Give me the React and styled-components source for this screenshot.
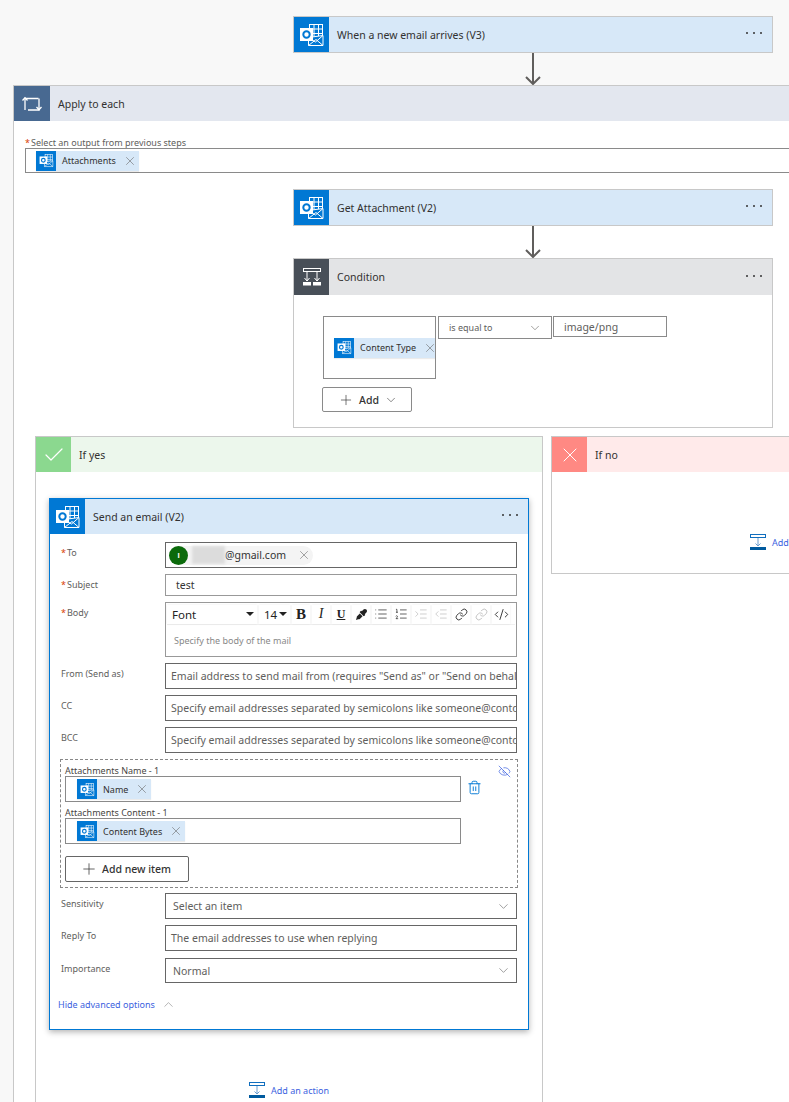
import React from "react";
import styled, { createGlobalStyle } from "styled-components";
import { ChevronDown, ChevronUp, X, Plus, Check, List, ListOrdered, IndentIncrease, IndentDecrease, Link, CodeXml, EyeOff, Trash2 } from "lucide-react";
import { FaEyeDropper } from "react-icons/fa";

const Global = createGlobalStyle`
  html, body { margin: 0; padding: 0; background: #f8f8f8; }
  * { box-sizing: border-box; }
  body { font-family: "Noto Sans", "Open Sans", sans-serif; color: #252423; }
`;

const Page = styled.div`
  width: 789px; height: 1102px; overflow: hidden; background: #f8f8f8; padding-top: 16px;
`;
const Center = styled.div`
  margin-left: ${p => p.$left}px; width: ${p => p.$width}px; display: flex; flex-direction: column;
`;
const Card = styled.div`
  border: 1px solid #c8c8c8; background: ${p => p.$bg || "#fff"};
`;
const Head = styled.div`
  height: ${p => p.$h || 35}px; background: ${p => p.$bg}; display: flex; align-items: center;
`;
const IconBlock = styled.div`
  width: ${p => p.$w || 35}px; height: 100%; background: ${p => p.$bg}; display: flex; align-items: center; justify-content: center; flex: none;
  color: #fff;
`;
const Title = styled.span`
  margin-left: 8px; font-size: 10.5px; color: #323130; flex: 1; white-space: nowrap;
`;
const DotRow = styled.div`
  display: flex; gap: 5px; margin: -3px 10px 0 0; flex: none;
`;
const Dot = styled.span`
  width: 2px; height: 2px; background: #333; border-radius: 50%;
`;
const ArrowWrap = styled.div`
  display: flex; justify-content: center; height: ${p => p.$h}px; line-height: 0;
`;
const Scope = styled.div`
  margin: 0 0 0 13px; width: 900px; background: #fff; border: 1px solid #c8c8c8; border-bottom: 0; height: 1020px;
`;
const ScopeBody = styled.div`
  padding: 0 0 0 11px;
`;
const TopLabel = styled.div`
  font-size: 9px; line-height: 10px; color: #605e5c; margin-top: 17px; white-space: nowrap;
`;
const Star = styled.span`
  color: #d83b01; margin-right: 1px;
`;
const Wide = styled.div`
  width: 880px; height: 25px; border: 1px solid #8a8a8a; display: flex; align-items: center; padding-left: 10px;
`;
const Token = styled.div`
  height: 20px; background: #d7e8f8; display: inline-flex; align-items: center; flex: none; font-size: 9px; color: #323130;
  box-shadow: 0 1px 1px rgba(0,0,0,.08); white-space: nowrap;
`;
const TokenIcon = styled.div`
  width: 20px; height: 100%; background: #0078d4; display: flex; align-items: center; justify-content: center; margin-right: 6px;
`;
const TokenX = styled(X)`
  margin-left: 7px; margin-right: 2px; color: #666;
`;
const Inner = styled.div`
  margin-left: 279px; width: 480px; margin-top: 16px; display: flex; flex-direction: column;
`;
const CondBody = styled.div`
  padding: 21px 0 15px 28px;
`;
const CondRow = styled.div`
  display: flex; align-items: flex-start; padding-left: 1px;
`;
const Operand = styled.div`
  width: 113px; height: 63px; border: 1px solid #8a8a8a; display: flex; align-items: center; padding-left: 10px; overflow: hidden; margin-right: 2px;
`;
const OpSelect = styled.div`
  width: 114px; height: 23px; border: 1px solid #8a8a8a; font-size: 9px; display: flex; align-items: center; justify-content: space-between; padding: 0 9px 0 10px; margin-right: 1px; color: #605e5c;
`;
const OpValue = styled.div`
  width: 114px; height: 21px; border: 1px solid #8a8a8a; font-size: 10.5px; display: flex; align-items: center; padding-left: 10px; color: #605e5c;
`;
const AddBtn = styled.div`
  width: 90px; height: 25px; margin-top: 8px; border: 1px solid #8a8a8a; border-radius: 2px; display: flex; align-items: center; padding-left: 15px; font-size: 10.5px; font-weight: 500; color: #333; gap: 5px;
`;
const Branches = styled.div`
  display: flex; gap: 8px; margin: 8px 0 0 21px; align-items: flex-start;
`;
const Branch = styled.div`
  width: ${p => p.$w}px; height: ${p => p.$height}px; border: 1px solid #c8c8c8; ${p => p.$open && "border-bottom: 0;"} background: #fff; flex: none;
`;
const ActionCard = styled.div`
  width: 480px; height: 532px; margin: 26px 0 0 13px; border: 1px solid #0078d4; background: #fff; box-shadow: 0 2px 6px rgba(0,0,0,.3);
`;
const Form = styled.div`
  padding: 8px 11px 0;
`;
const Row = styled.div`
  display: flex; margin-bottom: ${p => p.$mb ?? 6}px;
`;
const Label = styled.div`
  width: 104px; flex: none; font-size: 9px; line-height: 14px; padding-top: 4px; color: #605e5c; white-space: nowrap;
`;
const Input = styled.div`
  width: 352px; height: ${p => p.$h}px; border: 1px solid ${p => p.$dark ? "#666" : "#999"}; display: flex; align-items: center; justify-content: space-between;
  font-size: 10.5px; color: ${p => p.$dim ? "#605e5c" : "#333"}; padding-left: ${p => p.$pad ?? 5}px; padding-right: 3px; white-space: nowrap; overflow: hidden;
`;
const Chip = styled.div`
  height: 19px; width: 144px; margin-left: -3px; border-radius: 10px; background: #f4f4f4; display: flex; align-items: center; font-size: 10.5px; flex: none; color: #333;
`;
const Avatar = styled.div`
  width: 19px; height: 19px; border-radius: 50%; background: #0b6a0b; color: #fff; font-family: "Liberation Sans", sans-serif; font-size: 8px; font-weight: 700; display: flex; align-items: center; justify-content: center; flex: none;
`;
const Blur = styled.div`
  width: 33px; height: 18px; margin-left: 4px; background: #dcdcdc; filter: blur(1.5px); flex: none;
`;
const ChipX = styled(X)`
  margin-left: 11px; color: #666;
`;
const Body = styled.div`
  width: 352px; height: 55px; border: 1px solid #999; display: flex; flex-direction: column;
`;
const Toolbar = styled.div`
  height: 21px; margin: 1px 1px 0; display: flex; align-items: center; gap: 2px; border-bottom: 1px solid #f0f0f0; background: #fff;
`;
const Tool = styled.div`
  width: ${p => p.$w || 18}px; height: 19px; display: flex; align-items: center; justify-content: ${p => p.$between ? "space-between" : "center"}; padding: ${p => p.$between ? "0 3px 0 5px" : "0"};
  font-size: 11.5px; color: ${p => p.$off ? "#bbb" : "#222"}; box-shadow: 0 0 2px rgba(0,0,0,.08); flex: none;
`;
const SerifB = styled.span`
  font-family: "Liberation Serif", serif; font-size: 15px; font-weight: 700; color: #222;
`;
const SerifI = styled.span`
  font-family: "Liberation Serif", serif; font-size: 14px; font-style: italic; color: #222;
`;
const SerifU = styled.span`
  font-family: "Liberation Serif", serif; font-size: 12px; font-weight: 700; text-decoration: underline; color: #222;
`;
const Caret = styled.span`
  width: 0; height: 0; border-left: 4px solid transparent; border-right: 4px solid transparent; border-top: 4px solid #222;
`;
const Placeholder = styled.div`
  font-size: 9px; color: #888; padding: 9px 0 0 8px;
`;
const Dashed = styled.div`
  width: 458px; height: 129px; margin: 0 0 5px -1px; border: 1px dashed #888; padding: 5px 4px 0; display: flex;
`;
const ArrCol = styled.div`
  width: 396px; flex: none;
`;
const ArrLabel = styled.div`
  font-size: 9px; line-height: 11px; color: #484644; white-space: nowrap;
`;
const ArrInput = styled.div`
  height: 26px; border: 1px solid #8a8a8a; display: flex; align-items: center; padding-left: 11px; margin-bottom: 5px;
`;
const ArrSide = styled.div`
  flex: 1; display: flex; flex-direction: column;
`;
const EyeBtn = styled(EyeOff)`
  color: #3b5fe0; align-self: flex-end; margin: 0 2px 0 0;
`;
const TrashBtn = styled(Trash2)`
  color: #0078d4; margin: 2px 0 0 6px;
`;
const AddItem = styled.div`
  width: 124px; height: 26px; margin-top: 12px; border: 1px solid #666; border-radius: 2px; display: flex; align-items: center; padding-left: 14px; gap: 4px; font-size: 10.5px; font-weight: 500; color: #333;
`;
const LinkRow = styled.div`
  display: flex; align-items: center; gap: 6px; margin: 14px 0 0 -3px; font-size: 9px; color: #3b5fe0;
`;
const GrayChev = styled(ChevronUp)`
  color: #888;
`;
const SelectChev = styled(ChevronDown)`
  color: #666; margin-right: 2px;
`;
const AddAction = styled.div`
  display: flex; align-items: center; gap: 6px; font-size: 9px; color: #3b5fe0; white-space: nowrap;
  margin: ${p => p.$m};
`;

const Outlook = ({ size = 26 }) => (
  <svg width={size} height={size} viewBox="0 0 26 26" fill="none">
    <g stroke="#fff" strokeWidth="1" fill="none">
      <rect x="10.5" y="2.5" width="13" height="13" />
      <path d="M15 2.5v13M19.5 2.5v13M10.5 7h13M10.5 11.5h13" />
      <path d="M9.5 15.5v8h14.5v-10z" fill="#0078d4" />
      <path d="M9.5 23.5l7.5-6M24 23.5l-7-6M9.5 15.5l7 4.5 7.5-6.5" />
    </g>
    <rect x="1" y="6" width="13" height="13" fill="#fff" />
    <circle cx="7.5" cy="12.5" r="3.2" stroke="#0078d4" strokeWidth="2" />
  </svg>
);

const Apply = () => (
  <svg width="20" height="16" viewBox="0 0 20 16" fill="none" stroke="#fff" strokeWidth="1.3">
    <path d="M3 14V2.5h13.5" />
    <path d="M0.5 4.5L3 1.8l2.5 2.7" />
    <path d="M17 2.5v11.5H6" />
    <path d="M14.5 11L17 13.8l2.5-2.8" />
  </svg>
);

const CondIcon = () => (
  <svg width="20" height="20" viewBox="0 0 20 20" fill="none" stroke="#fff" strokeWidth="1">
    <rect x="1.5" y="1.5" width="17" height="3" />
    <path d="M5 5v9M15 5v9M2.5 11l2.5 3 2.5-3M12.5 11l2.5 3 2.5-3" />
    <rect x="1" y="15" width="8" height="3.5" fill="#fff" stroke="none" />
    <rect x="11" y="15" width="8" height="3.5" fill="#fff" stroke="none" />
  </svg>
);

const ActionIcon = () => (
  <svg width="16" height="16" viewBox="0 0 16 16" fill="none">
    <rect x="0.5" y="0.5" width="15" height="3" stroke="#106ebe" />
    <path d="M8 4v8" stroke="#6e9fd0" />
    <path d="M5.5 9.5L8 12l2.5-2.5" stroke="#6e9fd0" />
    <rect y="13" width="16" height="3" fill="#005a9e" />
  </svg>
);

const OutToken = ({ children }) => (
  <Token>
    <TokenIcon><Outlook size={15} /></TokenIcon>
    {children}
    <TokenX size={14} strokeWidth={1} />
  </Token>
);

const Arrow = ({ h }) => (
  <ArrowWrap $h={h}>
    <svg width="16" height={h} viewBox={`0 0 16 ${h}`} fill="none" stroke="#605e5c" strokeWidth="2">
      <path d={`M8 0V${h - 1}`} />
      <path d={`M1 ${h - 8}L8 ${h - 1}L15 ${h - 8}`} />
    </svg>
  </ArrowWrap>
);

const Dots = () => (
  <DotRow><Dot /><Dot /><Dot /></DotRow>
);

const Step = ({ title }) => (
  <Card>
    <Head $bg="#d7e8f8">
      <IconBlock $bg="#0078d4"><Outlook /></IconBlock>
      <Title>{title}</Title>
      <Dots />
    </Head>
  </Card>
);

const Field = ({ req, label, children, mb }) => (
  <Row $mb={mb}>
    <Label>{req && <Star>*</Star>}{label}</Label>
    {children}
  </Row>
);

export default function App() {
  return (
    <Page>
      <Global />
      <Center $left={293} $width={480}>
        <Step title="When a new email arrives (V3)" />
        <Arrow h={32} />
      </Center>
      <Scope>
        <Head $bg="#e3e7ef" $h={35}>
          <IconBlock $bg="#486991" $w={36}><Apply /></IconBlock>
          <Title>Apply to each</Title>
        </Head>
        <ScopeBody>
          <TopLabel><Star>*</Star>Select an output from previous steps</TopLabel>
          <Wide><OutToken>Attachments</OutToken></Wide>
        </ScopeBody>
        <Inner>
          <Step title="Get Attachment (V2)" />
          <Arrow h={32} />
          <Card>
            <Head $bg="#e3e4e6" $h={36}>
              <IconBlock $bg="#484f58"><CondIcon /></IconBlock>
              <Title>Condition</Title>
              <Dots />
            </Head>
            <CondBody>
              <CondRow>
                <Operand><OutToken>Content Type</OutToken></Operand>
                <OpSelect>is equal to<ChevronDown size={14} strokeWidth={1} /></OpSelect>
                <OpValue>image/png</OpValue>
              </CondRow>
              <AddBtn><Plus size={16} strokeWidth={1} />Add<ChevronDown size={14} strokeWidth={1} /></AddBtn>
            </CondBody>
          </Card>
        </Inner>
        <Branches>
          <Branch $w={508} $height={680} $open>
            <Head $bg="#ecf7ec">
              <IconBlock $bg="#8bd88f"><Check size={24} strokeWidth={1.2} /></IconBlock>
              <Title>If yes</Title>
            </Head>
            <ActionCard>
              <Head $bg="#d7e8f8">
                <IconBlock $bg="#0078d4"><Outlook /></IconBlock>
                <Title>Send an email (V2)</Title>
                <Dots />
              </Head>
              <Form>
                <Field req label="To">
                  <Input $h={26} $dark $pad={6}>
                    <Chip>
                      <Avatar>I</Avatar>
                      <Blur />
                      @gmail.com
                      <ChipX size={14} strokeWidth={1} />
                    </Chip>
                  </Input>
                </Field>
                <Field req label="Subject"><Input $h={22} $pad={10}>test</Input></Field>
                <Field req label="Body">
                  <Body>
                    <Toolbar>
                      <Tool $w={90} $between>Font<Caret /></Tool>
                      <Tool $w={31} $between>14<Caret /></Tool>
                      <Tool><SerifB>B</SerifB></Tool>
                      <Tool><SerifI>I</SerifI></Tool>
                      <Tool><SerifU>U</SerifU></Tool>
                      <Tool><FaEyeDropper size={11} /></Tool>
                      <Tool><List size={14} strokeWidth={1.2} /></Tool>
                      <Tool><ListOrdered size={14} strokeWidth={1.2} /></Tool>
                      <Tool $off><IndentIncrease size={14} strokeWidth={1.2} /></Tool>
                      <Tool $off><IndentDecrease size={14} strokeWidth={1.2} /></Tool>
                      <Tool><Link size={13} strokeWidth={1.6} /></Tool>
                      <Tool $off><Link size={13} strokeWidth={1.6} /></Tool>
                      <Tool><CodeXml size={15} strokeWidth={1.4} /></Tool>
                    </Toolbar>
                    <Placeholder>Specify the body of the mail</Placeholder>
                  </Body>
                </Field>
                <Field label="From (Send as)"><Input $h={26} $dark $dim>Email address to send mail from (requires "Send as" or "Send on behalf of" permission)</Input></Field>
                <Field label="CC"><Input $h={26} $dark $dim>Specify email addresses separated by semicolons like someone@contoso.com</Input></Field>
                <Field label="BCC"><Input $h={26} $dark $dim>Specify email addresses separated by semicolons like someone@contoso.com</Input></Field>
                <Dashed>
                  <ArrCol>
                    <ArrLabel>Attachments Name - 1</ArrLabel>
                    <ArrInput><OutToken>Name</OutToken></ArrInput>
                    <ArrLabel>Attachments Content - 1</ArrLabel>
                    <ArrInput><OutToken>Content Bytes</OutToken></ArrInput>
                    <AddItem><Plus size={18} strokeWidth={1} />Add new item</AddItem>
                  </ArrCol>
                  <ArrSide>
                    <EyeBtn size={13} strokeWidth={1.3} />
                    <TrashBtn size={15} strokeWidth={1.5} />
                  </ArrSide>
                </Dashed>
                <Field label="Sensitivity"><Input $h={26} $dark $dim $pad={7}>Select an item<SelectChev size={15} strokeWidth={1} /></Input></Field>
                <Field label="Reply To" mb={7}><Input $h={26} $dark $dim>The email addresses to use when replying</Input></Field>
                <Field label="Importance" mb={0}><Input $h={25} $dark $dim $pad={7}>Normal<SelectChev size={15} strokeWidth={1} /></Input></Field>
                <LinkRow>Hide advanced options<GrayChev size={15} strokeWidth={1} /></LinkRow>
              </Form>
            </ActionCard>
            <AddAction $m="52px 0 0 213px"><ActionIcon />Add an action</AddAction>
          </Branch>
          <Branch $w={320} $height={138}>
            <Head $bg="#ffeaea">
              <IconBlock $bg="#ff8983"><X size={24} strokeWidth={1} /></IconBlock>
              <Title>If no</Title>
            </Head>
            <AddAction $m="62px 0 0 198px"><ActionIcon />Add an action</AddAction>
          </Branch>
        </Branches>
      </Scope>
    </Page>
  );
}
